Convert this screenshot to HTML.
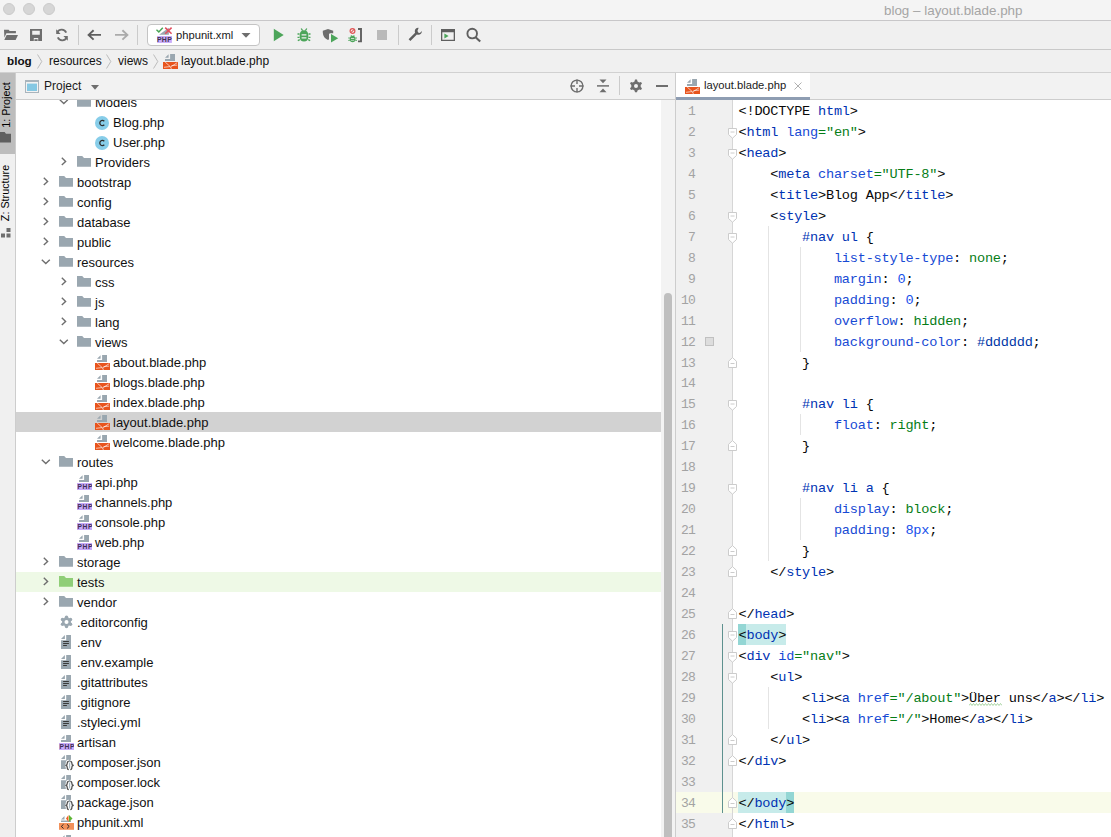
<!DOCTYPE html>
<html><head><meta charset="utf-8">
<style>
*{margin:0;padding:0;box-sizing:border-box}
html,body{width:1111px;height:837px;overflow:hidden;background:#f2f2f2;font-family:"Liberation Sans",sans-serif;color:#000}
.abs{position:absolute}
.tl{position:absolute;height:20px;line-height:22px;font-size:13px;white-space:nowrap;color:#111}
.cl{position:absolute;left:738.5px;height:21px;line-height:23px;font-family:"Liberation Mono",monospace;font-size:13.6px;letter-spacing:-0.21px;white-space:pre;color:#080808}
.ln{position:absolute;left:676px;width:19px;text-align:right;height:21px;line-height:23px;font-family:"Liberation Mono",monospace;font-size:13px;letter-spacing:-0.8px;color:#a3a3a3}
.t{color:#0033b3}
.a{color:#174ad4}
.v{color:#067d17}
.p{color:#174ad4}
.n{color:#1750eb}
.s{color:#0033b3}
.k{color:#0037a6}
.hr{position:absolute;height:1px;background:#cdcdcd}
.vr{position:absolute;width:1px;background:#cdcdcd}
</style></head><body>
<!-- title bar -->
<div class="abs" style="left:0;top:0;width:1111px;height:20px;background:#f4f4f4"></div>
<div class="abs" style="left:3px;top:3px;width:12px;height:12px;border-radius:50%;background:#d6d6d6;border:0.5px solid #cbcbcb"></div>
<div class="abs" style="left:23px;top:3px;width:12px;height:12px;border-radius:50%;background:#d6d6d6;border:0.5px solid #cbcbcb"></div>
<div class="abs" style="left:43px;top:3px;width:12px;height:12px;border-radius:50%;background:#d6d6d6;border:0.5px solid #cbcbcb"></div>
<div class="abs" style="left:884px;top:1px;height:20px;line-height:20px;font-size:13.4px;color:#a5a5a5;white-space:nowrap">blog – layout.blade.php</div>
<div class="hr" style="left:0;top:20px;width:1111px;background:#c8c7c9"></div>
<!-- toolbar -->
<div class="abs" style="left:0;top:21px;width:1111px;height:28px;background:#f0f0f0"></div>
<div class="hr" style="left:0;top:49px;width:1111px;background:#c9c9c9"></div>
<!-- toolbar icons -->
<svg class="abs" style="left:4px;top:29px" width="15" height="12"><path fill="#6e6e6e" d="M0 0.8H4.6L5.7 2H11.9V4.3H2.4L0.4 8.6Z"/><path fill="#6e6e6e" d="M0.3 11L2.6 6H14L11.6 11Z"/></svg>
<svg class="abs" style="left:30px;top:29px" width="12" height="12"><path fill="#6e6e6e" fill-rule="evenodd" d="M0 0H12V12H0Z M2.2 1.8V5.8H9.8V1.8Z M3.8 9V12H8.2V9Z"/><path fill="#6e6e6e" d="M4.4 10.2H7.6V12H4.4Z"/></svg>
<svg class="abs" style="left:55px;top:28px" width="14" height="14"><path d="M11.2 4.6A5 5 0 0 0 2.3 4.2 M2.8 9.4A5 5 0 0 0 11.7 9.8" fill="none" stroke="#6e6e6e" stroke-width="1.9"/><path fill="#6e6e6e" d="M1.2 1.2V6H5.6Z M12.8 12.8V8H8.4Z"/></svg>
<div class="abs" style="left:78px;top:25px;width:1px;height:20px;background:#cbcbcb"></div>
<svg class="abs" style="left:87px;top:29px" width="15" height="12"><path d="M14 5.9H2.4 M6.6 1.2L1.6 5.9L6.6 10.6" fill="none" stroke="#5f5f5f" stroke-width="1.9"/></svg>
<svg class="abs" style="left:114px;top:29px" width="15" height="12"><path d="M1 5.9H12.6 M8.4 1.2L13.4 5.9L8.4 10.6" fill="none" stroke="#ababab" stroke-width="1.9"/></svg>
<div class="abs" style="left:137px;top:25px;width:1px;height:20px;background:#cbcbcb"></div>
<div class="abs" style="left:147px;top:24px;width:113px;height:22px;background:#fff;border:1px solid #c4c4c4;border-radius:4px"></div>
<svg class="abs" style="left:156px;top:27px" width="17" height="17"><path fill="#9aa7b0" d="M3.1 7.7L12.9 0.8V7.7Z"/><path fill="#c8aafa" d="M1.1 9H15.9V15.9H1.1Z"/><text x="8.5" y="15.1" text-anchor="middle" font-family="Liberation Sans" font-weight="bold" font-size="6.9" fill="#3f3350" letter-spacing="0.3">PHP</text><path d="M0.4 2.7L2.8 4.9L6.8 0.8" fill="none" stroke="#4aa556" stroke-width="1.5"/><path d="M9.2 0.6L15.6 6.8 M15.6 0.6L9.2 6.8" fill="none" stroke="#e05060" stroke-width="1.6"/></svg>
<div class="abs" style="left:176px;top:24px;height:22px;line-height:22px;font-size:11.2px;color:#1a1a1a">phpunit.xml</div>
<svg class="abs" style="left:241px;top:33px" width="10" height="5"><path fill="#6e6e6e" d="M0.5 0H9.5L5 4.8Z"/></svg>
<svg class="abs" style="left:273px;top:28px" width="11" height="14"><path fill="#4ca55a" d="M0.8 0.7L10.7 7L0.8 13.2Z"/></svg>
<svg class="abs" style="left:297px;top:28px" width="14" height="14"><g fill="none" stroke="#4ca55a" stroke-width="1.3"><path d="M4.2 0.5L5.6 2.6 M9.8 0.5L8.4 2.6 M0.5 6H2.5 M11.5 6H13.5 M0.5 9.3H2.5 M11.5 9.3H13.5 M0.8 12.6L2.8 11.6 M13.2 12.6L11.2 11.6"/></g><path fill="#4ca55a" fill-rule="evenodd" d="M7 2.2C9.6 2.2 11.3 4 11.3 7.2V9.3C11.3 12 9.6 13.6 7 13.6C4.4 13.6 2.7 12 2.7 9.3V7.2C2.7 4 4.4 2.2 7 2.2Z M4.6 6.3H9.4V7.6H4.6Z M4.6 9.3H9.4V10.6H4.6Z"/></svg>
<svg class="abs" style="left:322px;top:29px" width="17" height="14"><path fill="#6e6e6e" d="M0.8 1.8L6 0L11.2 1.8V4.2L8.4 4.2C7.6 4.2 7 4.8 7 5.6V10.2L6 11C3 9.6 0.8 7 0.8 3.4Z"/><path fill="#4ca55a" d="M9 5.1L16.2 9.3L9 13.6Z"/></svg>
<svg class="abs" style="left:348px;top:28px" width="15" height="15"><circle cx="4.5" cy="3" r="2.4" fill="none" stroke="#e05555" stroke-width="1.2"/><path d="M2.9 4.6L6.1 1.4" stroke="#e05555" stroke-width="1.1"/><path fill="#4ca55a" d="M4.6 7.8C6.3 7.8 7.5 9 7.5 10.8V11.6C7.5 13.2 6.3 14.2 4.6 14.2C2.9 14.2 1.7 13.2 1.7 11.6V10.8C1.7 9 2.9 7.8 4.6 7.8Z"/><g stroke="#4ca55a" stroke-width="1"><path d="M0.3 10H1.8 M7.4 10H8.9 M0.3 12.4H1.8 M7.4 12.4H8.9 M3 7.2L3.9 8.2 M6.2 7.2L5.3 8.2"/></g><path fill="#f2f2f2" d="M3 10.3H6.2V10.9H3Z M3 12H6.2V12.6H3Z"/><path d="M10 1H13V13.4H10" fill="none" stroke="#5f5f5f" stroke-width="1.9"/></svg>
<div class="abs" style="left:377px;top:30px;width:10px;height:10px;background:#b9b9b9"></div>
<div class="abs" style="left:398px;top:25px;width:1px;height:20px;background:#cbcbcb"></div>
<svg class="abs" style="left:408px;top:27px" width="15" height="15"><path fill="#5f5f5f" d="M10.6 0.9C8.6 0.6 6.7 2.2 6.8 4.3C6.8 4.8 6.9 5.3 7.1 5.7L0.6 12.2L2.4 14L8.9 7.5C9.4 7.7 9.9 7.8 10.4 7.8C12.4 7.8 14.1 6 13.8 4L11.9 5.9L10.1 5.5L9.5 3.7Z"/></svg>
<div class="abs" style="left:431px;top:25px;width:1px;height:20px;background:#cbcbcb"></div>
<svg class="abs" style="left:441px;top:29px" width="15" height="12"><path fill="#5f5f5f" fill-rule="evenodd" d="M0 0H14V12H0Z M1.3 3.2V10.7H12.7V3.2Z"/><path fill="#4ca55a" d="M3.4 4.4L7.6 7L3.4 9.6Z"/></svg>
<svg class="abs" style="left:466px;top:27px" width="16" height="16"><circle cx="6.2" cy="6.6" r="4.8" fill="none" stroke="#5f5f5f" stroke-width="1.9"/><path d="M9.6 10.2L14.2 14.6" stroke="#5f5f5f" stroke-width="2.1"/></svg>
<!-- breadcrumb -->
<div class="abs" style="left:0;top:50px;width:1111px;height:22px;background:#f0f0f0"></div>
<div class="hr" style="left:0;top:72px;width:1111px;background:#d1d1d1"></div>
<div class="abs" style="left:7px;top:50px;height:22px;line-height:22px;font-size:11.7px;font-weight:bold;color:#111">blog</div>
<div class="abs" style="left:49px;top:50px;height:22px;line-height:22px;font-size:12px;color:#111">resources</div>
<div class="abs" style="left:118px;top:50px;height:22px;line-height:22px;font-size:12px;color:#111">views</div>
<div class="abs" style="left:181px;top:50px;height:22px;line-height:22px;font-size:12px;color:#111">layout.blade.php</div>
<svg class="abs" style="left:37px;top:54px" width="6" height="15"><path d="M0.5 0.5L4.8 7.5L0.5 14.5" fill="none" stroke="#b5b5b5" stroke-width="0.9"/></svg>
<svg class="abs" style="left:106px;top:54px" width="6" height="15"><path d="M0.5 0.5L4.8 7.5L0.5 14.5" fill="none" stroke="#b5b5b5" stroke-width="0.9"/></svg>
<svg class="abs" style="left:153px;top:54px" width="6" height="15"><path d="M0.5 0.5L4.8 7.5L0.5 14.5" fill="none" stroke="#b5b5b5" stroke-width="0.9"/></svg>
<svg class="abs" style="left:163px;top:54px" width="15" height="15"><path fill="#9aa7b0" d="M2 3.8L5.6 0.2V3.8Z M7.1 0H12V7H2V5.1H7.1Z"/><path fill="#e8541d" d="M0 8H15V15H0Z"/><path d="M2.2 8.1L7.6 12.9L14.2 8.7 M1 13.3L7 12.6 M8.5 11.7L14.2 11.1 M7.6 12.9L8.4 15" fill="none" stroke="#fff" stroke-width="0.75" opacity="0.85"/></svg>

<!-- left stripe -->
<div class="abs" style="left:0;top:73px;width:15px;height:764px;background:#f0f0f0"></div>
<div class="abs" style="left:0;top:73px;width:15px;height:81px;background:#bdbdbd"></div>
<div class="vr" style="left:15px;top:73px;height:764px"></div>

<!-- project header -->
<div class="abs" style="left:16px;top:73px;width:659px;height:26px;background:#f2f2f2"></div>
<div class="hr" style="left:16px;top:99px;width:659px"></div>
<div class="abs" style="left:44px;top:73px;height:26px;line-height:26px;font-size:12px;color:#1a1a1a">Project</div>

<!-- project header icons -->
<svg class="abs" style="left:25px;top:80px" width="14" height="13"><path fill="#a9b4bc" fill-rule="evenodd" d="M0 0H14V13H0Z M1 2V12H13V2Z"/><path fill="#85c8e3" d="M2 3.6H12V11H2Z"/></svg>
<svg class="abs" style="left:91px;top:85px" width="8" height="5"><path fill="#6e6e6e" d="M0 0H8L4 4.7Z"/></svg>
<svg class="abs" style="left:570px;top:79px" width="14" height="14"><circle cx="7" cy="7" r="5.9" fill="none" stroke="#6e6e6e" stroke-width="1.4"/><path d="M7 0.5V5 M7 9V13.5 M0.5 7H5 M9 7H13.5" stroke="#6e6e6e" stroke-width="1.4"/></svg>
<svg class="abs" style="left:597px;top:79px" width="12" height="14"><path fill="#6e6e6e" d="M2.5 0.6H9.5L6 4.2Z M2.5 13.2H9.5L6 9.6Z"/><path d="M0 6.9H12" stroke="#6e6e6e" stroke-width="1.5"/></svg>
<div class="abs" style="left:619px;top:76px;width:1px;height:19px;background:#cbcbcb"></div>
<svg class="abs" style="left:629px;top:79px" width="14" height="14"><path fill="#6e6e6e" fill-rule="evenodd" d="M6 0.6H8L8.5 2.4L10.2 3.4L12 2.9L13 4.6L11.7 5.9V8L13 9.3L12 11L10.2 10.5L8.5 11.5L8 13.3H6L5.5 11.5L3.8 10.5L2 11L1 9.3L2.3 8V5.9L1 4.6L2 2.9L3.8 3.4L5.5 2.4Z M7 5A2 2 0 1 0 7 9A2 2 0 1 0 7 5Z"/></svg>
<div class="abs" style="left:656px;top:85px;width:12px;height:2px;background:#6e6e6e"></div>
<!-- left stripe labels -->
<div class="abs" style="left:-19.5px;top:99px;width:50px;height:12px;line-height:12px;font-size:10.8px;color:#000;transform:rotate(-90deg);white-space:nowrap;text-align:center">1: Project</div>
<svg class="abs" style="left:0px;top:132px" width="12" height="11"><path fill="#5f5f5f" d="M0 0H4.6L6 1.8H11V10.5H0Z"/></svg>
<div class="abs" style="left:-25.5px;top:187px;width:60px;height:12px;line-height:12px;font-size:10.8px;color:#000;transform:rotate(-90deg);white-space:nowrap;text-align:center">Z: Structure</div>
<svg class="abs" style="left:1px;top:228px" width="10" height="10"><path fill="#6e6e6e" d="M5.5 0H9.5V4H5.5Z M0 5.5H4V9.5H0Z M5.5 5.5H9.5V9.5H5.5Z"/></svg>
<!-- tree -->
<div class="abs" style="left:16px;top:100px;width:645px;height:737px;background:#fff;overflow:hidden">
<div style="position:absolute;left:-16px;top:-100px;width:1111px;height:937px">
<svg style="position:absolute;left:59px;top:99px" width="10" height="6" viewBox="0 0 10 6" ><path d="M0.8 0.8L4.8 4.6L8.8 0.8" fill="none" stroke="#6e6e6e" stroke-width="1.4"/></svg>
<svg style="position:absolute;left:77px;top:96px" width="14" height="11" viewBox="0 0 14 11" ><path fill="#9aa7b0" d="M0 0H5.2L7 2H14V10.7H0Z"/></svg>
<div class="tl" style="left:95px;top:92px">Models</div>
<svg style="position:absolute;left:95px;top:116px" width="14" height="14" viewBox="0 0 14 14" ><circle cx="7" cy="7" r="7" fill="#87cde9"/><path d="M9.3 5.2A2.6 2.6 0 1 0 9.3 8.8" fill="none" stroke="#2f2f2f" stroke-width="1.3"/></svg>
<div class="tl" style="left:113px;top:112px">Blog.php</div>
<svg style="position:absolute;left:95px;top:136px" width="14" height="14" viewBox="0 0 14 14" ><circle cx="7" cy="7" r="7" fill="#87cde9"/><path d="M9.3 5.2A2.6 2.6 0 1 0 9.3 8.8" fill="none" stroke="#2f2f2f" stroke-width="1.3"/></svg>
<div class="tl" style="left:113px;top:132px">User.php</div>
<svg style="position:absolute;left:61px;top:157px" width="6" height="9" viewBox="0 0 6 9" ><path d="M0.8 0.8L4.6 4.4L0.8 8" fill="none" stroke="#6e6e6e" stroke-width="1.4"/></svg>
<svg style="position:absolute;left:77px;top:156px" width="14" height="11" viewBox="0 0 14 11" ><path fill="#9aa7b0" d="M0 0H5.2L7 2H14V10.7H0Z"/></svg>
<div class="tl" style="left:95px;top:152px">Providers</div>
<svg style="position:absolute;left:43px;top:177px" width="6" height="9" viewBox="0 0 6 9" ><path d="M0.8 0.8L4.6 4.4L0.8 8" fill="none" stroke="#6e6e6e" stroke-width="1.4"/></svg>
<svg style="position:absolute;left:59px;top:176px" width="14" height="11" viewBox="0 0 14 11" ><path fill="#9aa7b0" d="M0 0H5.2L7 2H14V10.7H0Z"/></svg>
<div class="tl" style="left:77px;top:172px">bootstrap</div>
<svg style="position:absolute;left:43px;top:197px" width="6" height="9" viewBox="0 0 6 9" ><path d="M0.8 0.8L4.6 4.4L0.8 8" fill="none" stroke="#6e6e6e" stroke-width="1.4"/></svg>
<svg style="position:absolute;left:59px;top:196px" width="14" height="11" viewBox="0 0 14 11" ><path fill="#9aa7b0" d="M0 0H5.2L7 2H14V10.7H0Z"/></svg>
<div class="tl" style="left:77px;top:192px">config</div>
<svg style="position:absolute;left:43px;top:217px" width="6" height="9" viewBox="0 0 6 9" ><path d="M0.8 0.8L4.6 4.4L0.8 8" fill="none" stroke="#6e6e6e" stroke-width="1.4"/></svg>
<svg style="position:absolute;left:59px;top:216px" width="14" height="11" viewBox="0 0 14 11" ><path fill="#9aa7b0" d="M0 0H5.2L7 2H14V10.7H0Z"/></svg>
<div class="tl" style="left:77px;top:212px">database</div>
<svg style="position:absolute;left:43px;top:237px" width="6" height="9" viewBox="0 0 6 9" ><path d="M0.8 0.8L4.6 4.4L0.8 8" fill="none" stroke="#6e6e6e" stroke-width="1.4"/></svg>
<svg style="position:absolute;left:59px;top:236px" width="14" height="11" viewBox="0 0 14 11" ><path fill="#9aa7b0" d="M0 0H5.2L7 2H14V10.7H0Z"/></svg>
<div class="tl" style="left:77px;top:232px">public</div>
<svg style="position:absolute;left:41px;top:259px" width="10" height="6" viewBox="0 0 10 6" ><path d="M0.8 0.8L4.8 4.6L8.8 0.8" fill="none" stroke="#6e6e6e" stroke-width="1.4"/></svg>
<svg style="position:absolute;left:59px;top:256px" width="14" height="11" viewBox="0 0 14 11" ><path fill="#9aa7b0" d="M0 0H5.2L7 2H14V10.7H0Z"/></svg>
<div class="tl" style="left:77px;top:252px">resources</div>
<svg style="position:absolute;left:61px;top:277px" width="6" height="9" viewBox="0 0 6 9" ><path d="M0.8 0.8L4.6 4.4L0.8 8" fill="none" stroke="#6e6e6e" stroke-width="1.4"/></svg>
<svg style="position:absolute;left:77px;top:276px" width="14" height="11" viewBox="0 0 14 11" ><path fill="#9aa7b0" d="M0 0H5.2L7 2H14V10.7H0Z"/></svg>
<div class="tl" style="left:95px;top:272px">css</div>
<svg style="position:absolute;left:61px;top:297px" width="6" height="9" viewBox="0 0 6 9" ><path d="M0.8 0.8L4.6 4.4L0.8 8" fill="none" stroke="#6e6e6e" stroke-width="1.4"/></svg>
<svg style="position:absolute;left:77px;top:296px" width="14" height="11" viewBox="0 0 14 11" ><path fill="#9aa7b0" d="M0 0H5.2L7 2H14V10.7H0Z"/></svg>
<div class="tl" style="left:95px;top:292px">js</div>
<svg style="position:absolute;left:61px;top:317px" width="6" height="9" viewBox="0 0 6 9" ><path d="M0.8 0.8L4.6 4.4L0.8 8" fill="none" stroke="#6e6e6e" stroke-width="1.4"/></svg>
<svg style="position:absolute;left:77px;top:316px" width="14" height="11" viewBox="0 0 14 11" ><path fill="#9aa7b0" d="M0 0H5.2L7 2H14V10.7H0Z"/></svg>
<div class="tl" style="left:95px;top:312px">lang</div>
<svg style="position:absolute;left:59px;top:339px" width="10" height="6" viewBox="0 0 10 6" ><path d="M0.8 0.8L4.8 4.6L8.8 0.8" fill="none" stroke="#6e6e6e" stroke-width="1.4"/></svg>
<svg style="position:absolute;left:77px;top:336px" width="14" height="11" viewBox="0 0 14 11" ><path fill="#9aa7b0" d="M0 0H5.2L7 2H14V10.7H0Z"/></svg>
<div class="tl" style="left:95px;top:332px">views</div>
<svg style="position:absolute;left:95px;top:355px" width="15" height="15" viewBox="0 0 15 15" ><path fill="#9aa7b0" d="M2 3.8L5.6 0.2V3.8Z M7.1 0H12V7H2V5.1H7.1Z"/><path fill="#e8541d" d="M0 8H15V15H0Z"/><path d="M2.2 8.1L7.6 12.9L14.2 8.7 M1 13.3L7 12.6 M8.5 11.7L14.2 11.1 M7.6 12.9L8.4 15" fill="none" stroke="#fff" stroke-width="0.75" opacity="0.85"/></svg>
<div class="tl" style="left:113px;top:352px">about.blade.php</div>
<svg style="position:absolute;left:95px;top:375px" width="15" height="15" viewBox="0 0 15 15" ><path fill="#9aa7b0" d="M2 3.8L5.6 0.2V3.8Z M7.1 0H12V7H2V5.1H7.1Z"/><path fill="#e8541d" d="M0 8H15V15H0Z"/><path d="M2.2 8.1L7.6 12.9L14.2 8.7 M1 13.3L7 12.6 M8.5 11.7L14.2 11.1 M7.6 12.9L8.4 15" fill="none" stroke="#fff" stroke-width="0.75" opacity="0.85"/></svg>
<div class="tl" style="left:113px;top:372px">blogs.blade.php</div>
<svg style="position:absolute;left:95px;top:395px" width="15" height="15" viewBox="0 0 15 15" ><path fill="#9aa7b0" d="M2 3.8L5.6 0.2V3.8Z M7.1 0H12V7H2V5.1H7.1Z"/><path fill="#e8541d" d="M0 8H15V15H0Z"/><path d="M2.2 8.1L7.6 12.9L14.2 8.7 M1 13.3L7 12.6 M8.5 11.7L14.2 11.1 M7.6 12.9L8.4 15" fill="none" stroke="#fff" stroke-width="0.75" opacity="0.85"/></svg>
<div class="tl" style="left:113px;top:392px">index.blade.php</div>
<div style="position:absolute;left:16px;top:412px;width:645px;height:20px;background:#d2d2d2"></div>
<svg style="position:absolute;left:95px;top:415px" width="15" height="15" viewBox="0 0 15 15" ><path fill="#9aa7b0" d="M2 3.8L5.6 0.2V3.8Z M7.1 0H12V7H2V5.1H7.1Z"/><path fill="#e8541d" d="M0 8H15V15H0Z"/><path d="M2.2 8.1L7.6 12.9L14.2 8.7 M1 13.3L7 12.6 M8.5 11.7L14.2 11.1 M7.6 12.9L8.4 15" fill="none" stroke="#fff" stroke-width="0.75" opacity="0.85"/></svg>
<div class="tl" style="left:113px;top:412px">layout.blade.php</div>
<svg style="position:absolute;left:95px;top:435px" width="15" height="15" viewBox="0 0 15 15" ><path fill="#9aa7b0" d="M2 3.8L5.6 0.2V3.8Z M7.1 0H12V7H2V5.1H7.1Z"/><path fill="#e8541d" d="M0 8H15V15H0Z"/><path d="M2.2 8.1L7.6 12.9L14.2 8.7 M1 13.3L7 12.6 M8.5 11.7L14.2 11.1 M7.6 12.9L8.4 15" fill="none" stroke="#fff" stroke-width="0.75" opacity="0.85"/></svg>
<div class="tl" style="left:113px;top:432px">welcome.blade.php</div>
<svg style="position:absolute;left:41px;top:459px" width="10" height="6" viewBox="0 0 10 6" ><path d="M0.8 0.8L4.8 4.6L8.8 0.8" fill="none" stroke="#6e6e6e" stroke-width="1.4"/></svg>
<svg style="position:absolute;left:59px;top:456px" width="14" height="11" viewBox="0 0 14 11" ><path fill="#9aa7b0" d="M0 0H5.2L7 2H14V10.7H0Z"/></svg>
<div class="tl" style="left:77px;top:452px">routes</div>
<svg style="position:absolute;left:77px;top:475px" width="15" height="15" viewBox="0 0 15 15" ><path fill="#9aa7b0" d="M2 3.8L5.6 0.2V3.8Z M7.1 0H12V7H2V5.1H7.1Z"/><path fill="#c8aafa" d="M0 8H15V15H0Z"/><text x="8.3" y="13.9" text-anchor="middle" font-family="Liberation Sans" font-weight="bold" font-size="6.7" fill="#3d2f55" letter-spacing="0.6">PHP</text></svg>
<div class="tl" style="left:95px;top:472px">api.php</div>
<svg style="position:absolute;left:77px;top:495px" width="15" height="15" viewBox="0 0 15 15" ><path fill="#9aa7b0" d="M2 3.8L5.6 0.2V3.8Z M7.1 0H12V7H2V5.1H7.1Z"/><path fill="#c8aafa" d="M0 8H15V15H0Z"/><text x="8.3" y="13.9" text-anchor="middle" font-family="Liberation Sans" font-weight="bold" font-size="6.7" fill="#3d2f55" letter-spacing="0.6">PHP</text></svg>
<div class="tl" style="left:95px;top:492px">channels.php</div>
<svg style="position:absolute;left:77px;top:515px" width="15" height="15" viewBox="0 0 15 15" ><path fill="#9aa7b0" d="M2 3.8L5.6 0.2V3.8Z M7.1 0H12V7H2V5.1H7.1Z"/><path fill="#c8aafa" d="M0 8H15V15H0Z"/><text x="8.3" y="13.9" text-anchor="middle" font-family="Liberation Sans" font-weight="bold" font-size="6.7" fill="#3d2f55" letter-spacing="0.6">PHP</text></svg>
<div class="tl" style="left:95px;top:512px">console.php</div>
<svg style="position:absolute;left:77px;top:535px" width="15" height="15" viewBox="0 0 15 15" ><path fill="#9aa7b0" d="M2 3.8L5.6 0.2V3.8Z M7.1 0H12V7H2V5.1H7.1Z"/><path fill="#c8aafa" d="M0 8H15V15H0Z"/><text x="8.3" y="13.9" text-anchor="middle" font-family="Liberation Sans" font-weight="bold" font-size="6.7" fill="#3d2f55" letter-spacing="0.6">PHP</text></svg>
<div class="tl" style="left:95px;top:532px">web.php</div>
<svg style="position:absolute;left:43px;top:557px" width="6" height="9" viewBox="0 0 6 9" ><path d="M0.8 0.8L4.6 4.4L0.8 8" fill="none" stroke="#6e6e6e" stroke-width="1.4"/></svg>
<svg style="position:absolute;left:59px;top:556px" width="14" height="11" viewBox="0 0 14 11" ><path fill="#9aa7b0" d="M0 0H5.2L7 2H14V10.7H0Z"/></svg>
<div class="tl" style="left:77px;top:552px">storage</div>
<div style="position:absolute;left:16px;top:572px;width:645px;height:20px;background:#eef9e6"></div>
<svg style="position:absolute;left:43px;top:577px" width="6" height="9" viewBox="0 0 6 9" ><path d="M0.8 0.8L4.6 4.4L0.8 8" fill="none" stroke="#6e6e6e" stroke-width="1.4"/></svg>
<svg style="position:absolute;left:59px;top:576px" width="14" height="11" viewBox="0 0 14 11" ><path fill="#8fce77" d="M0 0H5.2L7 2H14V10.7H0Z"/></svg>
<div class="tl" style="left:77px;top:572px">tests</div>
<svg style="position:absolute;left:43px;top:597px" width="6" height="9" viewBox="0 0 6 9" ><path d="M0.8 0.8L4.6 4.4L0.8 8" fill="none" stroke="#6e6e6e" stroke-width="1.4"/></svg>
<svg style="position:absolute;left:59px;top:596px" width="14" height="11" viewBox="0 0 14 11" ><path fill="#9aa7b0" d="M0 0H5.2L7 2H14V10.7H0Z"/></svg>
<div class="tl" style="left:77px;top:592px">vendor</div>
<svg style="position:absolute;left:59.5px;top:615px" width="13" height="14" viewBox="0 0 13 14" ><g fill="#9aa7b0"><circle cx="6.50" cy="2.30" r="1.75"/><circle cx="2.52" cy="4.60" r="1.75"/><circle cx="2.52" cy="9.20" r="1.75"/><circle cx="6.50" cy="11.50" r="1.75"/><circle cx="10.48" cy="9.20" r="1.75"/><circle cx="10.48" cy="4.60" r="1.75"/><circle cx="6.5" cy="6.9" r="4.5"/></g><circle cx="6.5" cy="6.9" r="2" fill="#fff"/></svg>
<div class="tl" style="left:77px;top:612px">.editorconfig</div>
<svg style="position:absolute;left:61px;top:635px" width="10" height="14" viewBox="0 0 10 14" ><path fill="#9aa7b0" d="M0 3.9L3.9 0V3.9Z M5.2 0H10V13.9H0V5.2H5.2Z"/><path fill="#3a3a3a" d="M2.1 5.9H7.9V6.9H2.1Z M2.1 7.9H7.9V8.9H2.1Z M2.1 10H5.9V11H2.1Z"/></svg>
<div class="tl" style="left:77px;top:632px">.env</div>
<svg style="position:absolute;left:61px;top:655px" width="10" height="14" viewBox="0 0 10 14" ><path fill="#9aa7b0" d="M0 3.9L3.9 0V3.9Z M5.2 0H10V13.9H0V5.2H5.2Z"/><path fill="#3a3a3a" d="M2.1 5.9H7.9V6.9H2.1Z M2.1 7.9H7.9V8.9H2.1Z M2.1 10H5.9V11H2.1Z"/></svg>
<div class="tl" style="left:77px;top:652px">.env.example</div>
<svg style="position:absolute;left:61px;top:675px" width="10" height="14" viewBox="0 0 10 14" ><path fill="#9aa7b0" d="M0 3.9L3.9 0V3.9Z M5.2 0H10V13.9H0V5.2H5.2Z"/><path fill="#3a3a3a" d="M2.1 5.9H7.9V6.9H2.1Z M2.1 7.9H7.9V8.9H2.1Z M2.1 10H5.9V11H2.1Z"/></svg>
<div class="tl" style="left:77px;top:672px">.gitattributes</div>
<svg style="position:absolute;left:61px;top:695px" width="10" height="14" viewBox="0 0 10 14" ><path fill="#9aa7b0" d="M0 3.9L3.9 0V3.9Z M5.2 0H10V13.9H0V5.2H5.2Z"/><path fill="#3a3a3a" d="M2.1 5.9H7.9V6.9H2.1Z M2.1 7.9H7.9V8.9H2.1Z M2.1 10H5.9V11H2.1Z"/></svg>
<div class="tl" style="left:77px;top:692px">.gitignore</div>
<svg style="position:absolute;left:61px;top:715px" width="10" height="14" viewBox="0 0 10 14" ><path fill="#9aa7b0" d="M0 3.9L3.9 0V3.9Z M5.2 0H10V13.9H0V5.2H5.2Z"/><path fill="#3a3a3a" d="M2.1 5.9H7.9V6.9H2.1Z M2.1 7.9H7.9V8.9H2.1Z M2.1 10H5.9V11H2.1Z"/></svg>
<div class="tl" style="left:77px;top:712px">.styleci.yml</div>
<svg style="position:absolute;left:59px;top:735px" width="15" height="15" viewBox="0 0 15 15" ><path fill="#9aa7b0" d="M2 3.8L5.6 0.2V3.8Z M7.1 0H12V7H2V5.1H7.1Z"/><path fill="#c8aafa" d="M0 8H15V15H0Z"/><text x="8.3" y="13.9" text-anchor="middle" font-family="Liberation Sans" font-weight="bold" font-size="6.7" fill="#3d2f55" letter-spacing="0.6">PHP</text></svg>
<div class="tl" style="left:77px;top:732px">artisan</div>
<svg style="position:absolute;left:61px;top:755px" width="15" height="16" viewBox="0 0 15 16" ><path fill="#9aa7b0" d="M0 3.9L3.9 0V3.9Z M5.2 0H10V13.9H0V5.2H5.2Z"/><path d="M7.8 6.3C6.2 6.3 6.2 7.3 6.2 8.6C6.2 9.8 5.8 10.45 4.3 10.45C5.8 10.45 6.2 11.1 6.2 12.3C6.2 13.6 6.2 14.6 7.8 14.6 M9.3 6.3C10.9 6.3 10.9 7.3 10.9 8.6C10.9 9.8 11.3 10.45 12.8 10.45C11.3 10.45 10.9 11.1 10.9 12.3C10.9 13.6 10.9 14.6 9.3 14.6" fill="none" stroke="#fff" stroke-width="3"/><path fill="#fff" d="M6 7H11V14H6Z"/><path d="M7.8 6.3C6.2 6.3 6.2 7.3 6.2 8.6C6.2 9.8 5.8 10.45 4.3 10.45C5.8 10.45 6.2 11.1 6.2 12.3C6.2 13.6 6.2 14.6 7.8 14.6 M9.3 6.3C10.9 6.3 10.9 7.3 10.9 8.6C10.9 9.8 11.3 10.45 12.8 10.45C11.3 10.45 10.9 11.1 10.9 12.3C10.9 13.6 10.9 14.6 9.3 14.6" fill="none" stroke="#505050" stroke-width="1.25"/><path d="M8.55 7.6V13.4" stroke="#a9b8c2" stroke-width="1.3"/></svg>
<div class="tl" style="left:77px;top:752px">composer.json</div>
<svg style="position:absolute;left:61px;top:775px" width="15" height="16" viewBox="0 0 15 16" ><path fill="#9aa7b0" d="M0 3.9L3.9 0V3.9Z M5.2 0H10V13.9H0V5.2H5.2Z"/><path d="M7.8 6.3C6.2 6.3 6.2 7.3 6.2 8.6C6.2 9.8 5.8 10.45 4.3 10.45C5.8 10.45 6.2 11.1 6.2 12.3C6.2 13.6 6.2 14.6 7.8 14.6 M9.3 6.3C10.9 6.3 10.9 7.3 10.9 8.6C10.9 9.8 11.3 10.45 12.8 10.45C11.3 10.45 10.9 11.1 10.9 12.3C10.9 13.6 10.9 14.6 9.3 14.6" fill="none" stroke="#fff" stroke-width="3"/><path fill="#fff" d="M6 7H11V14H6Z"/><path d="M7.8 6.3C6.2 6.3 6.2 7.3 6.2 8.6C6.2 9.8 5.8 10.45 4.3 10.45C5.8 10.45 6.2 11.1 6.2 12.3C6.2 13.6 6.2 14.6 7.8 14.6 M9.3 6.3C10.9 6.3 10.9 7.3 10.9 8.6C10.9 9.8 11.3 10.45 12.8 10.45C11.3 10.45 10.9 11.1 10.9 12.3C10.9 13.6 10.9 14.6 9.3 14.6" fill="none" stroke="#505050" stroke-width="1.25"/><path d="M8.55 7.6V13.4" stroke="#a9b8c2" stroke-width="1.3"/></svg>
<div class="tl" style="left:77px;top:772px">composer.lock</div>
<svg style="position:absolute;left:61px;top:795px" width="15" height="16" viewBox="0 0 15 16" ><path fill="#9aa7b0" d="M0 3.9L3.9 0V3.9Z M5.2 0H10V13.9H0V5.2H5.2Z"/><path d="M7.8 6.3C6.2 6.3 6.2 7.3 6.2 8.6C6.2 9.8 5.8 10.45 4.3 10.45C5.8 10.45 6.2 11.1 6.2 12.3C6.2 13.6 6.2 14.6 7.8 14.6 M9.3 6.3C10.9 6.3 10.9 7.3 10.9 8.6C10.9 9.8 11.3 10.45 12.8 10.45C11.3 10.45 10.9 11.1 10.9 12.3C10.9 13.6 10.9 14.6 9.3 14.6" fill="none" stroke="#fff" stroke-width="3"/><path fill="#fff" d="M6 7H11V14H6Z"/><path d="M7.8 6.3C6.2 6.3 6.2 7.3 6.2 8.6C6.2 9.8 5.8 10.45 4.3 10.45C5.8 10.45 6.2 11.1 6.2 12.3C6.2 13.6 6.2 14.6 7.8 14.6 M9.3 6.3C10.9 6.3 10.9 7.3 10.9 8.6C10.9 9.8 11.3 10.45 12.8 10.45C11.3 10.45 10.9 11.1 10.9 12.3C10.9 13.6 10.9 14.6 9.3 14.6" fill="none" stroke="#505050" stroke-width="1.25"/><path d="M8.55 7.6V13.4" stroke="#a9b8c2" stroke-width="1.3"/></svg>
<div class="tl" style="left:77px;top:792px">package.json</div>
<svg style="position:absolute;left:59px;top:815px" width="15" height="15" viewBox="0 0 15 15" ><path fill="#9aa7b0" d="M2 4.5L5.5 1V4.5Z M2 5.5H12V7H2Z"/><path fill="#ee5f1d" d="M7 3.5L9.5 0V7Z"/><path fill="#5cb533" d="M10 0L13.5 3.5L10 7Z"/><path fill="#f2915a" d="M0 8H15V14.8H0Z"/><path d="M4.5 9.3L2.3 11.4L4.5 13.5 M8 9.3L10.2 11.4L8 13.5" fill="none" stroke="#2a2a2a" stroke-width="1"/></svg>
<div class="tl" style="left:77px;top:812px">phpunit.xml</div>
<svg style="position:absolute;left:59px;top:835px" width="15" height="15" viewBox="0 0 15 15" ><path fill="#9aa7b0" d="M2 3.8L5.6 0.2V3.8Z M7.1 0H12V7H2V5.1H7.1Z"/><path fill="#c8aafa" d="M0 8H15V15H0Z"/><text x="8.3" y="13.9" text-anchor="middle" font-family="Liberation Sans" font-weight="bold" font-size="6.7" fill="#3d2f55" letter-spacing="0.6">PHP</text></svg>
<div class="tl" style="left:77px;top:832px">server.php</div>
</div></div>
<!-- scrollbar -->
<div class="abs" style="left:661px;top:100px;width:14px;height:737px;background:#f3f3f3"></div>
<div class="abs" style="left:664px;top:293px;width:8px;height:560px;border-radius:4px;background:#bfbfbf"></div>
<div class="vr" style="left:675px;top:73px;height:764px"></div>

<!-- editor tabs -->
<div class="abs" style="left:676px;top:73px;width:435px;height:26px;background:#f2f2f2"></div>
<div class="hr" style="left:676px;top:99px;width:435px"></div>
<div class="abs" style="left:676px;top:73px;width:134px;height:24px;background:#fff"></div>
<div class="abs" style="left:676px;top:97px;width:134px;height:3px;background:#8e9db2"></div>
<div class="abs" style="left:704px;top:73px;height:24px;line-height:24px;font-size:11.2px;color:#1a1a1a">layout.blade.php</div>
<svg class="abs" style="left:685px;top:79px" width="15" height="15"><path fill="#9aa7b0" d="M2 3.8L5.6 0.2V3.8Z M7.1 0H12V7H2V5.1H7.1Z"/><path fill="#e8541d" d="M0 8H15V15H0Z"/><path d="M2.2 8.1L7.6 12.9L14.2 8.7 M1 13.3L7 12.6 M8.5 11.7L14.2 11.1 M7.6 12.9L8.4 15" fill="none" stroke="#fff" stroke-width="0.75" opacity="0.85"/></svg>
<svg class="abs" style="left:794px;top:82px" width="8" height="8"><path d="M0.5 0.5L7.5 7.5M7.5 0.5L0.5 7.5" stroke="#b0b0b0" stroke-width="1"/></svg>

<!-- editor -->
<div class="abs" style="left:676px;top:100px;width:56px;height:737px;background:#f0f0f0"></div>
<div class="vr" style="left:732px;top:100px;height:737px;background:#d6d6d6"></div>
<div class="abs" style="left:733px;top:100px;width:378px;height:737px;background:#fff"></div>
<!-- current line -->

<div style="position:absolute;left:676px;top:791.68px;width:435px;height:21px;background:#f9fbea"></div>
<div style="position:absolute;left:732px;top:791.68px;width:1px;height:21px;background:#d6d6d6"></div>
<div style="position:absolute;left:768px;top:225.76px;width:1px;height:335.36px;background:#e4e4e4"></div>
<div style="position:absolute;left:800px;top:246.72px;width:1px;height:104.79999999999998px;background:#e4e4e4"></div>
<div style="position:absolute;left:800px;top:414.4px;width:1px;height:21px;background:#e4e4e4"></div>
<div style="position:absolute;left:800px;top:498.24px;width:1px;height:42px;background:#e4e4e4"></div>
<div style="position:absolute;left:768px;top:686.88px;width:1px;height:42px;background:#e4e4e4"></div>
<div style="position:absolute;left:738px;top:624.0px;width:48px;height:21px;background:#c7ebea"></div>
<div style="position:absolute;left:738px;top:624.0px;width:8px;height:21px;background:#93d6d4"></div>
<div style="position:absolute;left:738px;top:791.68px;width:56px;height:21px;background:#c7ebea"></div>
<div style="position:absolute;left:786px;top:791.68px;width:8px;height:21px;background:#93d6d4"></div>
<div style="position:absolute;left:722px;top:624.0px;width:1px;height:188.64px;background:#5e918f"></div>
<div style="position:absolute;left:705px;top:337px;width:9px;height:9px;background:#dddddd;border:1px solid #c0c0c0"></div>
<svg style="position:absolute;left:969px;top:702px" width="33" height="5" viewBox="0 0 33 5"><path d="M0 3.5 L1.5 1.5 L3 3.5 L4.5 1.5 L6 3.5 L7.5 1.5 L9 3.5 L10.5 1.5 L12 3.5 L13.5 1.5 L15 3.5 L16.5 1.5 L18 3.5 L19.5 1.5 L21 3.5 L22.5 1.5 L24 3.5 L25.5 1.5 L27 3.5 L28.5 1.5 L30 3.5 L31.5 1.5 L33 3.5" fill="none" stroke="#9fd098" stroke-width="0.9"/></svg>
<div class="cl" style="top:100.0px">&lt;!DOCTYPE <span class="t">html</span>&gt;</div>
<div class="ln" style="top:100.0px">1</div>
<div class="cl" style="top:120.96px">&lt;<span class="t">html</span> <span class="a">lang</span><span class="v">=&quot;en&quot;</span>&gt;</div>
<div class="ln" style="top:120.96px">2</div>
<div class="cl" style="top:141.92px">&lt;<span class="t">head</span>&gt;</div>
<div class="ln" style="top:141.92px">3</div>
<div class="cl" style="top:162.88px">    &lt;<span class="t">meta</span> <span class="a">charset</span><span class="v">=&quot;UTF-8&quot;</span>&gt;</div>
<div class="ln" style="top:162.88px">4</div>
<div class="cl" style="top:183.84px">    &lt;<span class="t">title</span>&gt;Blog App&lt;/<span class="t">title</span>&gt;</div>
<div class="ln" style="top:183.84px">5</div>
<div class="cl" style="top:204.8px">    &lt;<span class="t">style</span>&gt;</div>
<div class="ln" style="top:204.8px">6</div>
<div class="cl" style="top:225.76px">        <span class="s">#nav ul</span> {</div>
<div class="ln" style="top:225.76px">7</div>
<div class="cl" style="top:246.72px">            <span class="p">list-style-type</span>: <span class="v">none</span>;</div>
<div class="ln" style="top:246.72px">8</div>
<div class="cl" style="top:267.68px">            <span class="p">margin</span>: <span class="n">0</span>;</div>
<div class="ln" style="top:267.68px">9</div>
<div class="cl" style="top:288.64px">            <span class="p">padding</span>: <span class="n">0</span>;</div>
<div class="ln" style="top:288.64px">10</div>
<div class="cl" style="top:309.6px">            <span class="p">overflow</span>: <span class="v">hidden</span>;</div>
<div class="ln" style="top:309.6px">11</div>
<div class="cl" style="top:330.56px">            <span class="p">background-color</span>: <span class="k">#dddddd</span>;</div>
<div class="ln" style="top:330.56px">12</div>
<div class="cl" style="top:351.52px">        }</div>
<div class="ln" style="top:351.52px">13</div>
<div class="cl" style="top:372.48px"></div>
<div class="ln" style="top:372.48px">14</div>
<div class="cl" style="top:393.44px">        <span class="s">#nav li</span> {</div>
<div class="ln" style="top:393.44px">15</div>
<div class="cl" style="top:414.4px">            <span class="p">float</span>: <span class="v">right</span>;</div>
<div class="ln" style="top:414.4px">16</div>
<div class="cl" style="top:435.36px">        }</div>
<div class="ln" style="top:435.36px">17</div>
<div class="cl" style="top:456.32px"></div>
<div class="ln" style="top:456.32px">18</div>
<div class="cl" style="top:477.28px">        <span class="s">#nav li a</span> {</div>
<div class="ln" style="top:477.28px">19</div>
<div class="cl" style="top:498.24px">            <span class="p">display</span>: <span class="v">block</span>;</div>
<div class="ln" style="top:498.24px">20</div>
<div class="cl" style="top:519.2px">            <span class="p">padding</span>: <span class="n">8px</span>;</div>
<div class="ln" style="top:519.2px">21</div>
<div class="cl" style="top:540.16px">        }</div>
<div class="ln" style="top:540.16px">22</div>
<div class="cl" style="top:561.12px">    &lt;/<span class="t">style</span>&gt;</div>
<div class="ln" style="top:561.12px">23</div>
<div class="cl" style="top:582.08px"></div>
<div class="ln" style="top:582.08px">24</div>
<div class="cl" style="top:603.04px">&lt;/<span class="t">head</span>&gt;</div>
<div class="ln" style="top:603.04px">25</div>
<div class="cl" style="top:624.0px">&lt;<span class="t">body</span>&gt;</div>
<div class="ln" style="top:624.0px">26</div>
<div class="cl" style="top:644.96px">&lt;<span class="t">div</span> <span class="a">id</span><span class="v">=&quot;nav&quot;</span>&gt;</div>
<div class="ln" style="top:644.96px">27</div>
<div class="cl" style="top:665.92px">    &lt;<span class="t">ul</span>&gt;</div>
<div class="ln" style="top:665.92px">28</div>
<div class="cl" style="top:686.88px">        &lt;<span class="t">li</span>&gt;&lt;<span class="t">a</span> <span class="a">href</span><span class="v">=&quot;/about&quot;</span>&gt;Über uns&lt;/<span class="t">a</span>&gt;&lt;/<span class="t">li</span>&gt;</div>
<div class="ln" style="top:686.88px">29</div>
<div class="cl" style="top:707.84px">        &lt;<span class="t">li</span>&gt;&lt;<span class="t">a</span> <span class="a">href</span><span class="v">=&quot;/&quot;</span>&gt;Home&lt;/<span class="t">a</span>&gt;&lt;/<span class="t">li</span>&gt;</div>
<div class="ln" style="top:707.84px">30</div>
<div class="cl" style="top:728.8px">    &lt;/<span class="t">ul</span>&gt;</div>
<div class="ln" style="top:728.8px">31</div>
<div class="cl" style="top:749.76px">&lt;/<span class="t">div</span>&gt;</div>
<div class="ln" style="top:749.76px">32</div>
<div class="cl" style="top:770.72px"></div>
<div class="ln" style="top:770.72px">33</div>
<div class="cl" style="top:791.68px">&lt;/<span class="t">body</span>&gt;</div>
<div class="ln" style="top:791.68px">34</div>
<div class="cl" style="top:812.64px">&lt;/<span class="t">html</span>&gt;</div>
<div class="ln" style="top:812.64px">35</div>
<svg style="position:absolute;left:728px;top:127.96px" width="9" height="11" viewBox="0 0 9 11" ><path d="M0.5 0.5H8.5V6.5L4.5 10.2L0.5 6.5Z" fill="#fff" stroke="#cccccc" stroke-width="1"/><path d="M2.5 4H6.5" stroke="#cccccc" stroke-width="1"/></svg>
<svg style="position:absolute;left:728px;top:148.92px" width="9" height="11" viewBox="0 0 9 11" ><path d="M0.5 0.5H8.5V6.5L4.5 10.2L0.5 6.5Z" fill="#fff" stroke="#cccccc" stroke-width="1"/><path d="M2.5 4H6.5" stroke="#cccccc" stroke-width="1"/></svg>
<svg style="position:absolute;left:728px;top:211.8px" width="9" height="11" viewBox="0 0 9 11" ><path d="M0.5 0.5H8.5V6.5L4.5 10.2L0.5 6.5Z" fill="#fff" stroke="#cccccc" stroke-width="1"/><path d="M2.5 4H6.5" stroke="#cccccc" stroke-width="1"/></svg>
<svg style="position:absolute;left:728px;top:232.76px" width="9" height="11" viewBox="0 0 9 11" ><path d="M0.5 0.5H8.5V6.5L4.5 10.2L0.5 6.5Z" fill="#fff" stroke="#cccccc" stroke-width="1"/><path d="M2.5 4H6.5" stroke="#cccccc" stroke-width="1"/></svg>
<svg style="position:absolute;left:728px;top:356.52px" width="9" height="11" viewBox="0 0 9 11" ><path d="M0.5 10.5H8.5V4.3L4.5 0.6L0.5 4.3Z" fill="#fff" stroke="#cccccc" stroke-width="1"/><path d="M2.5 6.5H6.5" stroke="#cccccc" stroke-width="1"/></svg>
<svg style="position:absolute;left:728px;top:400.44px" width="9" height="11" viewBox="0 0 9 11" ><path d="M0.5 0.5H8.5V6.5L4.5 10.2L0.5 6.5Z" fill="#fff" stroke="#cccccc" stroke-width="1"/><path d="M2.5 4H6.5" stroke="#cccccc" stroke-width="1"/></svg>
<svg style="position:absolute;left:728px;top:440.36px" width="9" height="11" viewBox="0 0 9 11" ><path d="M0.5 10.5H8.5V4.3L4.5 0.6L0.5 4.3Z" fill="#fff" stroke="#cccccc" stroke-width="1"/><path d="M2.5 6.5H6.5" stroke="#cccccc" stroke-width="1"/></svg>
<svg style="position:absolute;left:728px;top:484.28px" width="9" height="11" viewBox="0 0 9 11" ><path d="M0.5 0.5H8.5V6.5L4.5 10.2L0.5 6.5Z" fill="#fff" stroke="#cccccc" stroke-width="1"/><path d="M2.5 4H6.5" stroke="#cccccc" stroke-width="1"/></svg>
<svg style="position:absolute;left:728px;top:545.16px" width="9" height="11" viewBox="0 0 9 11" ><path d="M0.5 10.5H8.5V4.3L4.5 0.6L0.5 4.3Z" fill="#fff" stroke="#cccccc" stroke-width="1"/><path d="M2.5 6.5H6.5" stroke="#cccccc" stroke-width="1"/></svg>
<svg style="position:absolute;left:728px;top:566.12px" width="9" height="11" viewBox="0 0 9 11" ><path d="M0.5 10.5H8.5V4.3L4.5 0.6L0.5 4.3Z" fill="#fff" stroke="#cccccc" stroke-width="1"/><path d="M2.5 6.5H6.5" stroke="#cccccc" stroke-width="1"/></svg>
<svg style="position:absolute;left:728px;top:608.04px" width="9" height="11" viewBox="0 0 9 11" ><path d="M0.5 10.5H8.5V4.3L4.5 0.6L0.5 4.3Z" fill="#fff" stroke="#cccccc" stroke-width="1"/><path d="M2.5 6.5H6.5" stroke="#cccccc" stroke-width="1"/></svg>
<svg style="position:absolute;left:728px;top:631.0px" width="9" height="11" viewBox="0 0 9 11" ><path d="M0.5 0.5H8.5V6.5L4.5 10.2L0.5 6.5Z" fill="#fff" stroke="#cccccc" stroke-width="1"/><path d="M2.5 4H6.5" stroke="#cccccc" stroke-width="1"/></svg>
<svg style="position:absolute;left:728px;top:651.96px" width="9" height="11" viewBox="0 0 9 11" ><path d="M0.5 0.5H8.5V6.5L4.5 10.2L0.5 6.5Z" fill="#fff" stroke="#cccccc" stroke-width="1"/><path d="M2.5 4H6.5" stroke="#cccccc" stroke-width="1"/></svg>
<svg style="position:absolute;left:728px;top:672.92px" width="9" height="11" viewBox="0 0 9 11" ><path d="M0.5 0.5H8.5V6.5L4.5 10.2L0.5 6.5Z" fill="#fff" stroke="#cccccc" stroke-width="1"/><path d="M2.5 4H6.5" stroke="#cccccc" stroke-width="1"/></svg>
<svg style="position:absolute;left:728px;top:733.8px" width="9" height="11" viewBox="0 0 9 11" ><path d="M0.5 10.5H8.5V4.3L4.5 0.6L0.5 4.3Z" fill="#fff" stroke="#cccccc" stroke-width="1"/><path d="M2.5 6.5H6.5" stroke="#cccccc" stroke-width="1"/></svg>
<svg style="position:absolute;left:728px;top:754.76px" width="9" height="11" viewBox="0 0 9 11" ><path d="M0.5 10.5H8.5V4.3L4.5 0.6L0.5 4.3Z" fill="#fff" stroke="#cccccc" stroke-width="1"/><path d="M2.5 6.5H6.5" stroke="#cccccc" stroke-width="1"/></svg>
<svg style="position:absolute;left:728px;top:796.68px" width="9" height="11" viewBox="0 0 9 11" ><path d="M0.5 10.5H8.5V4.3L4.5 0.6L0.5 4.3Z" fill="#fff" stroke="#cccccc" stroke-width="1"/><path d="M2.5 6.5H6.5" stroke="#cccccc" stroke-width="1"/></svg>
<svg style="position:absolute;left:728px;top:817.64px" width="9" height="11" viewBox="0 0 9 11" ><path d="M0.5 10.5H8.5V4.3L4.5 0.6L0.5 4.3Z" fill="#fff" stroke="#cccccc" stroke-width="1"/><path d="M2.5 6.5H6.5" stroke="#cccccc" stroke-width="1"/></svg>
</body></html>
